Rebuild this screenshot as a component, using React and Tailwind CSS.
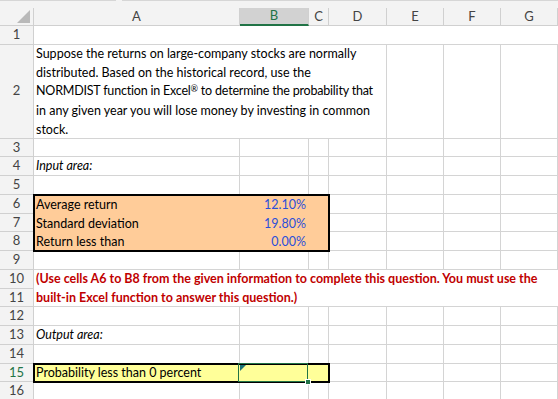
import React from 'react';

const GRID = 'border-r border-b border-[#d4d4d4]';
const HEAD = 'bg-[#f3f3f3] border-r border-b border-[#d0d0d0] flex items-center justify-center text-[13px] text-[#444]';

const Cell = ({ className = '', children }) => (
  <div className={`${GRID} ${className}`}>{children}</div>
);

const blanks = (n, key) =>
  Array.from({ length: n }, (_, i) => <Cell key={`${key}-${i}`} />);

const RowHead = ({ n, selected }) => (
  <div
    className={`${HEAD} ${selected ? 'bg-[#d2d2d2] text-[#217346]' : ''}`}
  >
    {n}
  </div>
);

const inputs = [
  ['Average return', '12.10%'],
  ['Standard deviation', '19.80%'],
  ['Return less than', '0.00%'],
];

export default function App() {
  const cols = ['A', 'B', 'C', 'D', 'E', 'F', 'G'];

  return (
    <div className="w-[558px] h-[399px] overflow-hidden bg-white font-['Lato','Liberation_Sans',sans-serif] text-[12.5px] text-black">
      {/* strip above the headers */}
      <div className="h-[8px] flex bg-[#f3f3f3]">
        <div className="w-[116px] border-t border-[#d6d6d6]" />
        <div className="w-[6px]" />
        <div className="flex-1 border-t border-[#d6d6d6]" />
      </div>

      <div className="grid grid-cols-[34px_206px_69px_20px_58px_57px_57px_57px] grid-rows-[18px_18.75px_93.75px_repeat(14,18.75px)]">
        {/* column headers */}
        <div className="bg-[#f3f3f3] border-r border-b border-[#d0d0d0] flex items-end justify-end pr-[2px] pb-[1px]">
          <svg width="14" height="14" viewBox="0 0 14 14">
            <polygon points="13,0 13,13 0,13" fill="#b9b9b9" />
          </svg>
        </div>
        {cols.map((c) =>
          c === 'B' ? (
            <div
              key={c}
              className="bg-[#d2d2d2] border-r border-b-2 border-r-[#d0d0d0] border-b-[#217346] flex items-center justify-center text-[13px] text-[#217346]"
            >
              {c}
            </div>
          ) : (
            <div key={c} className={HEAD}>
              {c}
            </div>
          )
        )}

        {/* row 1 */}
        <RowHead n={1} />
        <div className="col-span-7 border-b border-[#d4d4d4]" />

        {/* row 2 */}
        <RowHead n={2} />
        <Cell className="col-span-4 pl-[2px] leading-[18.75px] whitespace-nowrap">
          Suppose the returns on large-company stocks are normally
          <br />
          distributed. Based on the historical record, use the
          <br />
          <span className="tracking-[-0.2px]">
            NORMDIST function in Excel<span className="text-[9px] relative -top-[3px]">®</span> to determine the probability that
          </span>
          <br />
          in any given year you will lose money by investing in common
          <br />
          stock.
        </Cell>
        {blanks(3, 'r2')}

        {/* rows 3-5 */}
        <RowHead n={3} />
        {blanks(7, 'r3')}
        <RowHead n={4} />
        <Cell className="flex items-center pl-[2px] italic whitespace-nowrap">Input area:</Cell>
        {blanks(6, 'r4')}
        <RowHead n={5} />
        {blanks(7, 'r5')}

        {/* rows 6-8: input block */}
        <RowHead n={6} />
        <div className="col-span-3 row-span-3 -ml-px -mt-px -mr-px -mb-px relative z-10 bg-[#ffcc99] border-2 border-black flex flex-col">
          {inputs.map(([label, value]) => (
            <div key={label} className="flex-1 flex items-center justify-between pl-px pr-[22px]">
              <span>{label}</span>
              <span className="text-[#2b4fd9]">{value}</span>
            </div>
          ))}
        </div>
        {blanks(4, 'r6')}
        <RowHead n={7} />
        {blanks(4, 'r7')}
        <RowHead n={8} />
        {blanks(4, 'r8')}

        {/* row 9 */}
        <RowHead n={9} />
        {blanks(7, 'r9')}

        {/* rows 10-11: instruction */}
        <RowHead n={10} />
        <div className="col-span-7 row-span-2 border-b border-[#d4d4d4] pl-[2px] leading-[18.75px] font-bold text-[#c00000] whitespace-nowrap">
          (Use cells A6 to B8 from the given information to complete this question. You must use the
          <br />
          built-in Excel function to answer this question.)
        </div>
        <RowHead n={11} />

        {/* rows 12-14 */}
        <RowHead n={12} />
        {blanks(7, 'r12')}
        <RowHead n={13} />
        <Cell className="flex items-center pl-[2px] italic whitespace-nowrap">Output area:</Cell>
        {blanks(6, 'r13')}
        <RowHead n={14} />
        {blanks(7, 'r14')}

        {/* row 15: output block */}
        <RowHead n={15} selected />
        <div className="col-span-3 -ml-px -mt-px -mr-px -mb-px relative z-10 bg-[#ffff99] border-2 border-black flex items-center pl-px">
          <span>Probability less than 0 percent</span>
          <div className="absolute left-[203px] top-[-2px] w-[70px] h-[19px] border border-[#217346]">
            <svg className="absolute left-px top-px" width="6" height="6" viewBox="0 0 6 6">
              <polygon points="0,0 6,0 0,6" fill="#1e7478" />
            </svg>
            <div className="absolute right-[-4px] bottom-[-4px] w-[6px] h-[6px] bg-[#217346] border border-white" />
          </div>
        </div>
        {blanks(4, 'r15')}

        {/* row 16 */}
        <RowHead n={16} />
        {blanks(7, 'r16')}
      </div>
    </div>
  );
}
